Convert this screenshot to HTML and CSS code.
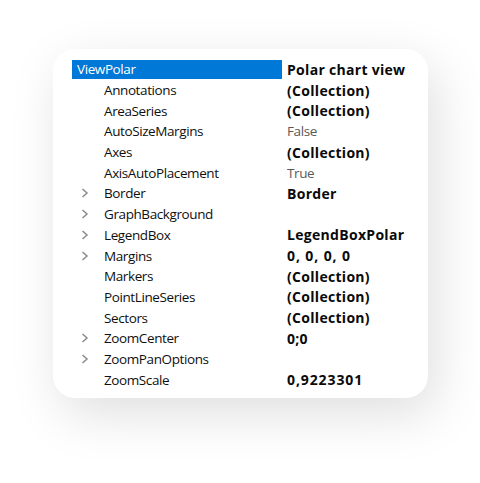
FILE: index.html
```html
<!DOCTYPE html>
<html>
<head>
<meta charset="utf-8">
<link rel="stylesheet" href="styles.css">
</head>
<body>
<div class="card">
  <div class="grid">
    <div class="row selected"><span class="exp"></span><span class="name">ViewPolar</span><span class="val bold">Polar chart view</span></div>
    <div class="row"><span class="exp"></span><span class="name ind">Annotations</span><span class="val bold">(Collection)</span></div>
    <div class="row"><span class="exp"></span><span class="name ind">AreaSeries</span><span class="val bold">(Collection)</span></div>
    <div class="row"><span class="exp"></span><span class="name ind">AutoSizeMargins</span><span class="val plain">False</span></div>
    <div class="row"><span class="exp"></span><span class="name ind">Axes</span><span class="val bold">(Collection)</span></div>
    <div class="row"><span class="exp"></span><span class="name ind">AxisAutoPlacement</span><span class="val plain">True</span></div>
    <div class="row"><span class="exp"><svg viewBox="0 0 8 10" width="8" height="10"><polyline points="1.5,1 6,5 1.5,9" /></svg></span><span class="name ind">Border</span><span class="val bold">Border</span></div>
    <div class="row"><span class="exp"><svg viewBox="0 0 8 10" width="8" height="10"><polyline points="1.5,1 6,5 1.5,9" /></svg></span><span class="name ind">GraphBackground</span><span class="val bold"></span></div>
    <div class="row"><span class="exp"><svg viewBox="0 0 8 10" width="8" height="10"><polyline points="1.5,1 6,5 1.5,9" /></svg></span><span class="name ind">LegendBox</span><span class="val bold">LegendBoxPolar</span></div>
    <div class="row"><span class="exp"><svg viewBox="0 0 8 10" width="8" height="10"><polyline points="1.5,1 6,5 1.5,9" /></svg></span><span class="name ind">Margins</span><span class="val bold num">0, 0, 0, 0</span></div>
    <div class="row"><span class="exp"></span><span class="name ind">Markers</span><span class="val bold">(Collection)</span></div>
    <div class="row"><span class="exp"></span><span class="name ind">PointLineSeries</span><span class="val bold">(Collection)</span></div>
    <div class="row"><span class="exp"></span><span class="name ind">Sectors</span><span class="val bold">(Collection)</span></div>
    <div class="row"><span class="exp"><svg viewBox="0 0 8 10" width="8" height="10"><polyline points="1.5,1 6,5 1.5,9" /></svg></span><span class="name ind">ZoomCenter</span><span class="val bold">0;0</span></div>
    <div class="row"><span class="exp"><svg viewBox="0 0 8 10" width="8" height="10"><polyline points="1.5,1 6,5 1.5,9" /></svg></span><span class="name ind">ZoomPanOptions</span><span class="val bold"></span></div>
    <div class="row"><span class="exp"></span><span class="name ind">ZoomScale</span><span class="val bold num">0,9223301</span></div>
  </div>
</div>
</body>
</html>
```
FILE: styles.css
```css
html, body {
  margin: 0;
  padding: 0;
  background: #ffffff;
}
body {
  width: 480px;
  height: 483px;
  overflow: hidden;
  font-family: "Open Sans", "Noto Sans", "Liberation Sans", sans-serif;
}
.card {
  margin: 49px 0 0 53px;
  width: 375px;
  height: 349px;
  box-sizing: border-box;
  padding: 10px 0 0 19px;
  background: #ffffff;
  border-radius: 22px;
  box-shadow: 8px 16px 52px rgba(0, 0, 0, 0.13);
}
.grid {
  display: flex;
  flex-direction: column;
}
.row {
  display: grid;
  grid-template-columns: 210px 1fr;
  height: 20.7px;
  align-items: center;
  font-size: 13.5px;
  letter-spacing: -0.4px;
  color: #0f0f0f;
}
.exp {
  grid-column: 1;
  grid-row: 1;
  display: flex;
  align-items: center;
  padding-left: 9px;
}
.exp svg {
  fill: none;
  stroke: #8a8a8a;
  stroke-width: 1.5;
}
.name {
  grid-column: 1;
  grid-row: 1;
  white-space: nowrap;
}
.name.ind {
  padding-left: 32px;
}
.val {
  grid-column: 2;
  grid-row: 1;
  padding-left: 5px;
  white-space: nowrap;
}
.val.bold {
  font-weight: 700;
  font-size: 14px;
  color: #0a0a0a;
  letter-spacing: 0.3px;
}
.val.bold.num {
  letter-spacing: 0.9px;
}
.val.plain {
  color: #5a5a5a;
}
.selected .name {
  background: #0078d7;
  color: #ffffff;
  padding-left: 5px;
  height: 19px;
  line-height: 19px;
}
```
